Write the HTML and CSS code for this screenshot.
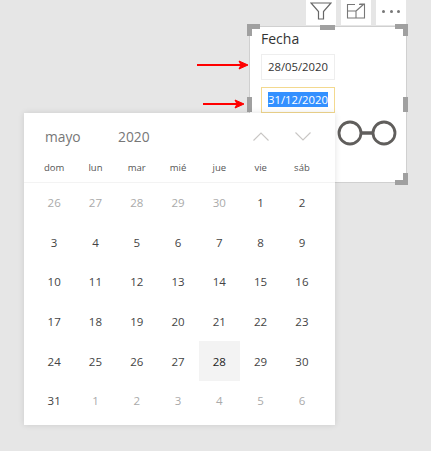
FILE: index.html
```html
<!DOCTYPE html>
<html lang="es">
<head>
<meta charset="utf-8">
<title>Fecha</title>
<link rel="stylesheet" href="styles.css">
</head>
<body>
<div class="stage">
  <div class="toolbar">
    <button class="tool"><svg width="22" height="18" viewBox="0 0 22 18"><path d="M1 1H21L13.500 9.500V17H8.500V9.500Z" fill="none" stroke="#666" stroke-width="1.200"/></svg></button>
    <button class="tool"><svg width="20" height="16" viewBox="0 0 20 16"><path d="M1.500 8V1.500H9M13 1.500H18.500V15H10M1.500 8H10V15H1.500ZM10 8L18 1M13.500 1H18.500V5.500" fill="none" stroke="#777" stroke-width="1.100"/></svg></button>
    <button class="tool"><span class="dot"></span><span class="dot"></span><span class="dot"></span></button>
  </div>
  <section class="card">
    <h1 class="card-title">Fecha</h1>
    <div class="date-input">28/05/2020</div>
    <div class="date-input active"><span class="selected">31/12/2020</span></div>
    <svg class="glasses" width="60" height="28" viewBox="0 0 60 28"><circle cx="13" cy="14" r="11" fill="none" stroke="#605e5c" stroke-width="2.800"/><circle cx="47" cy="14" r="11" fill="none" stroke="#605e5c" stroke-width="2.800"/><path d="M24 14H36" stroke="#605e5c" stroke-width="3.500"/></svg>
    <i class="handle tl"></i><i class="handle tm"></i><i class="handle tr"></i><i class="handle ml"></i><i class="handle mr"></i><i class="handle bl"></i><i class="handle br"></i>
  </section>
  <svg class="arrow arrow-one" width="52" height="10" viewBox="0 0 52 10"><path d="M0 5H46" stroke="#f00" stroke-width="2"/><path d="M42 1L51 5L42 9L44 5Z" fill="#f00" stroke="#f00"/></svg>
  <svg class="arrow arrow-two" width="42" height="10" viewBox="0 0 42 10"><path d="M0 5H36" stroke="#f00" stroke-width="2"/><path d="M32 1L41 5L32 9L34 5Z" fill="#f00" stroke="#f00"/></svg>
  <section class="calendar">
    <header class="cal-head">
      <span class="month">mayo</span><span class="year">2020</span>
      <span class="nav">
        <svg width="16" height="9" viewBox="0 0 16 9"><path d="M0.500 8.500L8 1L15.500 8.500" fill="none" stroke="#c8c6c4" stroke-width="1.100"/></svg>
        <svg width="16" height="9" viewBox="0 0 16 9"><path d="M0.500 0.500L8 8L15.500 0.500" fill="none" stroke="#c8c6c4" stroke-width="1.100"/></svg>
      </span>
    </header>
    <div class="weekdays"><span>dom</span><span>lun</span><span>mar</span><span>mié</span><span>jue</span><span>vie</span><span>sáb</span></div>
    <div class="days">
      <span class="out">26</span><span class="out">27</span><span class="out">28</span><span class="out">29</span><span class="out">30</span><span>1</span><span>2</span>
      <span>3</span><span>4</span><span>5</span><span>6</span><span>7</span><span>8</span><span>9</span>
      <span>10</span><span>11</span><span>12</span><span>13</span><span>14</span><span>15</span><span>16</span>
      <span>17</span><span>18</span><span>19</span><span>20</span><span>21</span><span>22</span><span>23</span>
      <span>24</span><span>25</span><span>26</span><span>27</span><span class="today">28</span><span>29</span><span>30</span>
      <span>31</span><span class="out">1</span><span class="out">2</span><span class="out">3</span><span class="out">4</span><span class="out">5</span><span class="out">6</span>
    </div>
  </section>
</div>
</body>
</html>
```
FILE: styles.css
```css
* { box-sizing: border-box; }
html, body { margin: 0; height: 100%; }
body { background: #e6e6e6; font-family: "Open Sans", "Noto Sans", sans-serif; color: #333; overflow: hidden; }
.stage { position: relative; width: 431px; height: 451px; }
.toolbar { display: flex; gap: 5px; height: 25px; justify-content: flex-end; padding-right: 25px; }
.tool { width: 30px; height: 25px; padding: 0 0 3px; border: 0; background: #fff; display: flex; align-items: center; justify-content: center; gap: 4.500px; }
.dot { width: 3px; height: 3px; border-radius: 50%; background: #777; }
.card { position: relative; margin: 1px 0 0 249px; width: 158px; height: 157px; background: #fff; border: 1px solid #d0d0d0; padding: 3px 11px; }
.card-title { margin: 0 0 6px; font-size: 14px; font-weight: 400; line-height: 18px; color: #333; }
.date-input { width: 74px; height: 26px; margin-bottom: 7px; border: 1px solid #eee; font-size: 11.300px; line-height: 24px; padding-left: 6px; color: #333; white-space: nowrap; }
.date-input.active { border-color: #f3d98f; }
.selected { display: inline-block; background: #3390ff; color: #fff; line-height: 15px; width: 60px; }
.glasses { position: absolute; left: 87px; top: 92px; }
.handle { position: absolute; background: #a0a0a0; display: block; }
.tl, .tr, .br, .bl { width: 13px; height: 12px; background: none; border: 0 solid #a0a0a0; }
.tl { left: -3px; top: -3px; border-width: 5px 0 0 5px; }
.tr { right: -2px; top: -3px; border-width: 5px 5px 0 0; }
.br { right: -2px; bottom: -3px; border-width: 0 5px 5px 0; }
.bl { left: -3px; bottom: -3px; border-width: 0 0 5px 5px; }
.tm { left: 70px; top: -2px; width: 15px; height: 5px; }
.ml { left: -3px; top: 70px; width: 5px; height: 15px; }
.mr { right: -2px; top: 70px; width: 5px; height: 15px; }
.arrow { position: absolute; display: block; }
.arrow-one { left: 197px; top: 60px; }
.arrow-two { left: 203px; top: 99px; }
.calendar { position: absolute; left: 24px; top: 113px; width: 311px; height: 312px; background: #fff; box-shadow: 0 0 6px rgba(0, 0, 0, .12); }
.cal-head { display: flex; align-items: center; height: 47px; padding: 0 24px 0 21px; font-size: 13.800px; color: #777; }
.month { width: 73px; }
.nav { margin-left: auto; display: flex; gap: 26px; }
.weekdays { display: grid; grid-template-columns: repeat(7, 41.300px); padding: 0 9.500px; height: 23px; border-bottom: 1px solid #f3f3f3; font-size: 9.500px; line-height: 16px; color: #555; text-align: center; }
.days { display: grid; grid-template-columns: repeat(7, 41.300px); grid-auto-rows: 39.600px; padding: 0 9.500px; font-size: 11.500px; color: #444; text-align: center; }
.days span { display: flex; align-items: center; justify-content: center; }
.days .out { color: #aaa; }
.days .today { background: #f3f3f3; color: #222; }
```
